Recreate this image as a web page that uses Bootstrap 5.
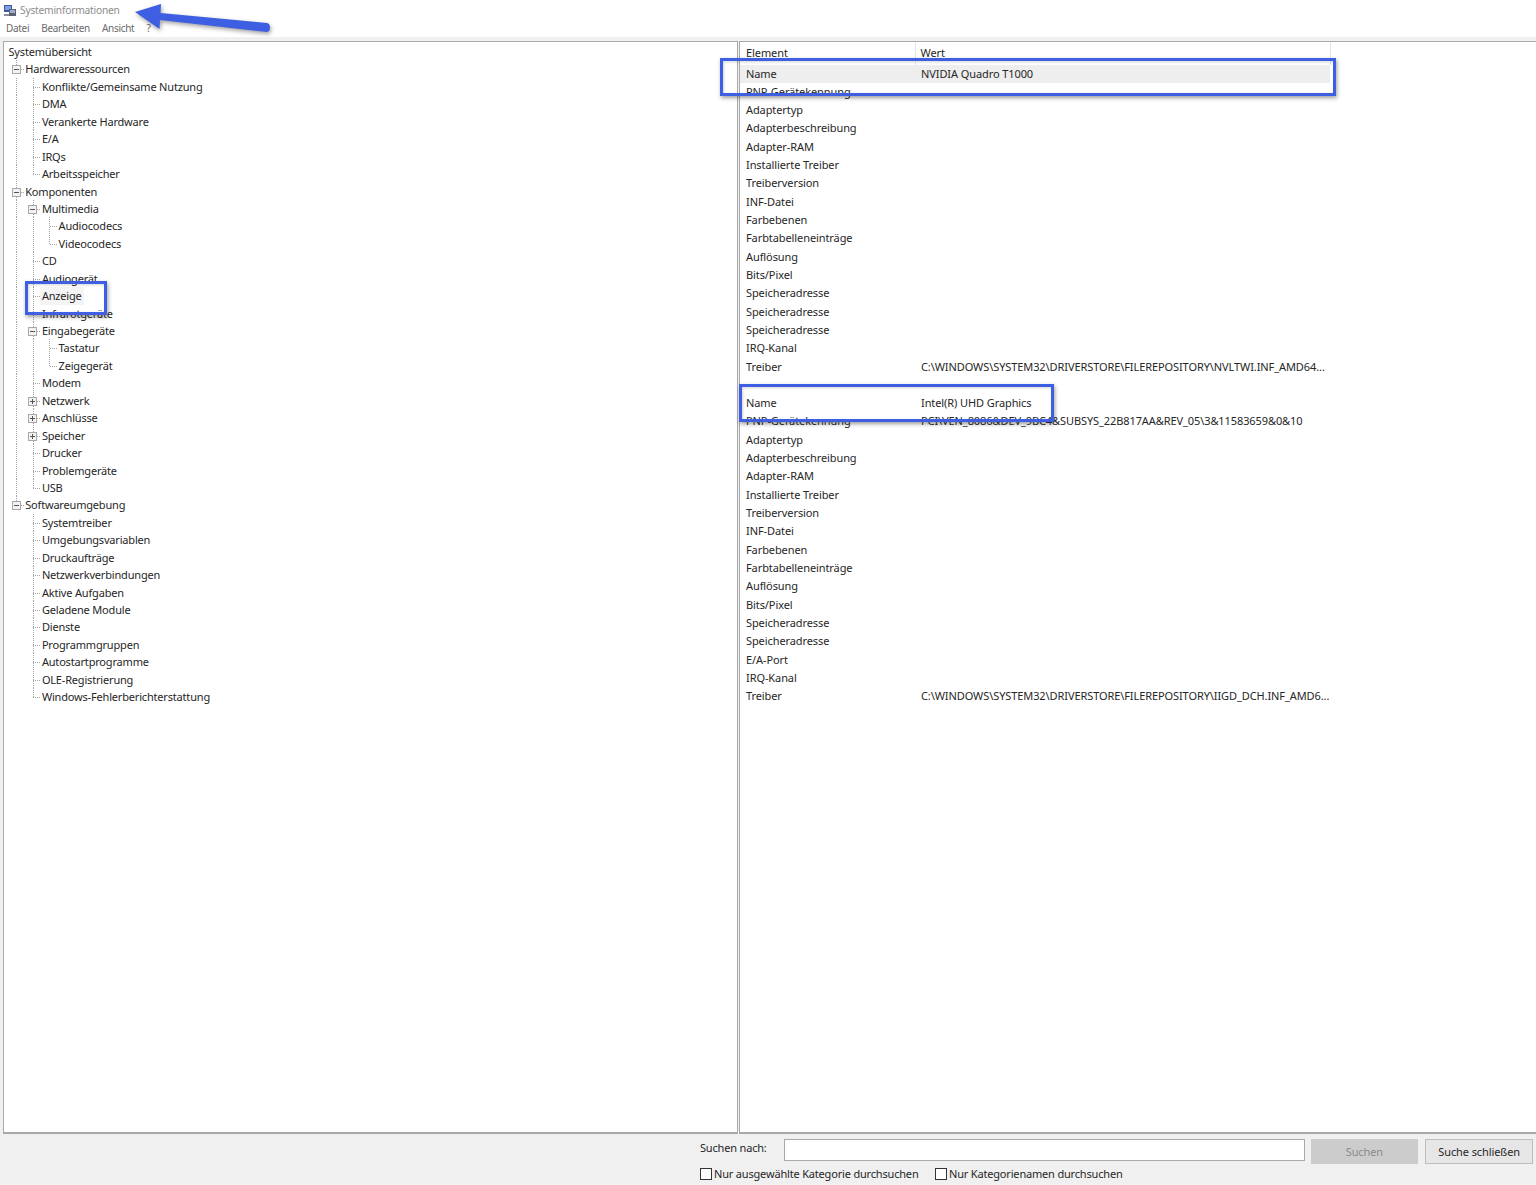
<!doctype html>
<html lang="de"><head><meta charset="utf-8"><title>Systeminformationen</title>
<link href="https://cdn.jsdelivr.net/npm/bootstrap@5.3.0/dist/css/bootstrap.min.css" rel="stylesheet">
<style>
html,body{height:1185px;overflow:hidden}
body{font-family:"Noto Sans","Liberation Sans",sans-serif;font-size:11px;letter-spacing:-.18px;color:#262626;background:#f0f0f0;position:relative}
.topbar{height:37px;background:#fff}
.ttl{height:20px;padding:1px 0 0 3px;color:#8c8c8c;gap:3px;font-size:10.2px;letter-spacing:-.2px}
.mnu{height:17px;padding-left:6px;gap:12px;color:#6a6a6a;font-size:10px;letter-spacing:-.3px}
.panes{height:1097px;padding:4px 0 0 3px;gap:1px}
.pane{background:#fff;border:1.5px solid #a9a9a9;border-bottom-width:2px}
.pl{width:735px;padding:1px 0 0 4.5px}
.pr{flex:1;border-right:0}
.trw{height:17.45px;line-height:17.45px;white-space:nowrap}
.tc{flex:0 0 16.7px;height:100%;position:relative}
.tv,.tt{background:repeating-linear-gradient(to bottom,#a4a4a4 0 1px,transparent 1px 2px) 7.500px 0/1px 100% no-repeat}
.tt::after,.tl::after,.tx::after{content:"";position:absolute;left:8px;top:9px;width:8px;height:1px;background:repeating-linear-gradient(to right,#a4a4a4 0 1px,transparent 1px 2px)}
.tl::before{content:"";position:absolute;left:7.500px;top:0;width:1px;height:9px;background:repeating-linear-gradient(to bottom,#a4a4a4 0 1px,transparent 1px 2px)}
.tx svg{position:absolute;left:3px;top:5px;z-index:1}
.te{background:repeating-linear-gradient(to bottom,#a4a4a4 0 1px,transparent 1px 2px) 7.500px 0/1px 9px no-repeat}
.c1{width:175px}
.c2{width:415px}
.tbl{table-layout:fixed;width:100%;margin:0;--bs-table-bg:transparent;--bs-table-color:#262626;font-size:11px;letter-spacing:-.09px}
.tbl th,.tbl td{padding:0 0 0 6px;height:18.32px;line-height:18.32px;font-weight:400;border:0;white-space:nowrap;overflow:hidden}
.tbl th{height:20.5px;line-height:22.5px;box-shadow:none}
.tbl th+th{border-left:1px solid #e5e5e5}
.tbl th:nth-child(2){padding-left:5px}
.hl td{background:#eeeeee}
.hl td:last-child{background:transparent}
.ftr{padding:5px 3px 0 700px;height:51px}
.lb{width:84px;height:22px;line-height:18px}
.srch{width:522px;height:22px;border:1px solid #a9a9a9;border-radius:0;padding:0 4px;background:#fff}
.bx{height:25px;width:108px;padding:0;border-radius:0;font-size:11px;letter-spacing:-.1px;line-height:21px;--bs-btn-color:#262626;--bs-btn-bg:#e6e6e6;--bs-btn-border-color:#bdbdbd}
.b1{margin-left:6px;--bs-btn-disabled-bg:#cccccc;--bs-btn-disabled-border-color:#cccccc;--bs-btn-disabled-color:#8a8a8a;--bs-btn-disabled-opacity:1}
.b2{margin-left:7px}
.ck{margin-top:2px;line-height:16px}
.ck input.form-check-input{width:12px;height:12px;margin:0 2px 0 0;border:1px solid #333;border-radius:0;flex:none}
.ck1{width:235px}
.mk{position:absolute;border:3px solid #3f5fe3;box-shadow:1px 2px 4px rgba(40,40,40,.45),inset 1px 1px 3px rgba(40,40,40,.2);pointer-events:none}
.m1{left:720px;top:58px;width:616px;height:38px}
.m2{left:739px;top:384px;width:315px;height:38px}
.m3{left:25px;top:281px;width:82px;height:34px}
.arw{position:absolute;left:130px;top:0;filter:drop-shadow(1px 2px 2px rgba(40,40,40,.45))}
.mrk{background:#f4f4f4;padding:0 2px;margin:0 -2px}
</style></head>
<body>
<div class="topbar">
<div class="ttl d-flex align-items-center"><svg width="14" height="14" viewBox="0 0 14 14"><rect x="1" y="1" width="8" height="7" fill="#3a58a8"/><rect x="2" y="2" width="6" height="4" fill="#7fa0dd"/><rect x="6" y="5" width="7" height="7" fill="#5c6270"/><rect x="7" y="6" width="5" height="3" fill="#9fb0cc"/><rect x="1" y="10" width="5" height="2" fill="#8a8f99"/></svg><span>Systeminformationen</span></div>
<div class="mnu d-flex align-items-center"><span>Datei</span><span>Bearbeiten</span><span>Ansicht</span><span>?</span></div>
</div>
<div class="panes d-flex">
<div class="pane pl">
<div class="trw">Systemübersicht</div>
<div class="trw d-flex"><span class="tc tx te"><svg width="9" height="9"><rect x=".5" y=".5" width="8" height="8" fill="#f2f2f2" stroke="#a8a8a8"/><path d="M2 4.500h5" stroke="#555"/></svg></span><span>Hardwareressourcen</span></div>
<div class="trw d-flex"><span class="tc tv"></span><span class="tc tt"></span><span>Konflikte/Gemeinsame Nutzung</span></div>
<div class="trw d-flex"><span class="tc tv"></span><span class="tc tt"></span><span>DMA</span></div>
<div class="trw d-flex"><span class="tc tv"></span><span class="tc tt"></span><span>Verankerte Hardware</span></div>
<div class="trw d-flex"><span class="tc tv"></span><span class="tc tt"></span><span>E/A</span></div>
<div class="trw d-flex"><span class="tc tv"></span><span class="tc tt"></span><span>IRQs</span></div>
<div class="trw d-flex"><span class="tc tv"></span><span class="tc tl"></span><span>Arbeitsspeicher</span></div>
<div class="trw d-flex"><span class="tc tx tv"><svg width="9" height="9"><rect x=".5" y=".5" width="8" height="8" fill="#f2f2f2" stroke="#a8a8a8"/><path d="M2 4.500h5" stroke="#555"/></svg></span><span>Komponenten</span></div>
<div class="trw d-flex"><span class="tc tv"></span><span class="tc tx tv"><svg width="9" height="9"><rect x=".5" y=".5" width="8" height="8" fill="#f2f2f2" stroke="#a8a8a8"/><path d="M2 4.500h5" stroke="#555"/></svg></span><span>Multimedia</span></div>
<div class="trw d-flex"><span class="tc tv"></span><span class="tc tv"></span><span class="tc tt"></span><span>Audiocodecs</span></div>
<div class="trw d-flex"><span class="tc tv"></span><span class="tc tv"></span><span class="tc tl"></span><span>Videocodecs</span></div>
<div class="trw d-flex"><span class="tc tv"></span><span class="tc tt"></span><span>CD</span></div>
<div class="trw d-flex"><span class="tc tv"></span><span class="tc tt"></span><span>Audiogerät</span></div>
<div class="trw d-flex"><span class="tc tv"></span><span class="tc tt"></span><span class="mrk">Anzeige</span></div>
<div class="trw d-flex"><span class="tc tv"></span><span class="tc tt"></span><span>Infrarotgeräte</span></div>
<div class="trw d-flex"><span class="tc tv"></span><span class="tc tx tv"><svg width="9" height="9"><rect x=".5" y=".5" width="8" height="8" fill="#f2f2f2" stroke="#a8a8a8"/><path d="M2 4.500h5" stroke="#555"/></svg></span><span>Eingabegeräte</span></div>
<div class="trw d-flex"><span class="tc tv"></span><span class="tc tv"></span><span class="tc tt"></span><span>Tastatur</span></div>
<div class="trw d-flex"><span class="tc tv"></span><span class="tc tv"></span><span class="tc tl"></span><span>Zeigegerät</span></div>
<div class="trw d-flex"><span class="tc tv"></span><span class="tc tt"></span><span>Modem</span></div>
<div class="trw d-flex"><span class="tc tv"></span><span class="tc tx tv"><svg width="9" height="9"><rect x=".5" y=".5" width="8" height="8" fill="#f2f2f2" stroke="#a8a8a8"/><path d="M2 4.500h5M4.500 2v5" stroke="#555"/></svg></span><span>Netzwerk</span></div>
<div class="trw d-flex"><span class="tc tv"></span><span class="tc tx tv"><svg width="9" height="9"><rect x=".5" y=".5" width="8" height="8" fill="#f2f2f2" stroke="#a8a8a8"/><path d="M2 4.500h5M4.500 2v5" stroke="#555"/></svg></span><span>Anschlüsse</span></div>
<div class="trw d-flex"><span class="tc tv"></span><span class="tc tx tv"><svg width="9" height="9"><rect x=".5" y=".5" width="8" height="8" fill="#f2f2f2" stroke="#a8a8a8"/><path d="M2 4.500h5M4.500 2v5" stroke="#555"/></svg></span><span>Speicher</span></div>
<div class="trw d-flex"><span class="tc tv"></span><span class="tc tt"></span><span>Drucker</span></div>
<div class="trw d-flex"><span class="tc tv"></span><span class="tc tt"></span><span>Problemgeräte</span></div>
<div class="trw d-flex"><span class="tc tv"></span><span class="tc tl"></span><span>USB</span></div>
<div class="trw d-flex"><span class="tc tx te"><svg width="9" height="9"><rect x=".5" y=".5" width="8" height="8" fill="#f2f2f2" stroke="#a8a8a8"/><path d="M2 4.500h5" stroke="#555"/></svg></span><span>Softwareumgebung</span></div>
<div class="trw d-flex"><span class="tc"></span><span class="tc tt"></span><span>Systemtreiber</span></div>
<div class="trw d-flex"><span class="tc"></span><span class="tc tt"></span><span>Umgebungsvariablen</span></div>
<div class="trw d-flex"><span class="tc"></span><span class="tc tt"></span><span>Druckaufträge</span></div>
<div class="trw d-flex"><span class="tc"></span><span class="tc tt"></span><span>Netzwerkverbindungen</span></div>
<div class="trw d-flex"><span class="tc"></span><span class="tc tt"></span><span>Aktive Aufgaben</span></div>
<div class="trw d-flex"><span class="tc"></span><span class="tc tt"></span><span>Geladene Module</span></div>
<div class="trw d-flex"><span class="tc"></span><span class="tc tt"></span><span>Dienste</span></div>
<div class="trw d-flex"><span class="tc"></span><span class="tc tt"></span><span>Programmgruppen</span></div>
<div class="trw d-flex"><span class="tc"></span><span class="tc tt"></span><span>Autostartprogramme</span></div>
<div class="trw d-flex"><span class="tc"></span><span class="tc tt"></span><span>OLE-Registrierung</span></div>
<div class="trw d-flex"><span class="tc"></span><span class="tc tl"></span><span>Windows-Fehlerberichterstattung</span></div>
</div>
<div class="pane pr">
<table class="table tbl">
<colgroup><col class="c1"><col class="c2"><col></colgroup>
<thead><tr><th>Element</th><th>Wert</th><th></th></tr></thead>
<tbody>
<tr class="hl"><td>Name</td><td>NVIDIA Quadro T1000</td><td></td></tr>
<tr><td>PNP-Gerätekennung</td><td></td><td></td></tr>
<tr><td>Adaptertyp</td><td></td><td></td></tr>
<tr><td>Adapterbeschreibung</td><td></td><td></td></tr>
<tr><td>Adapter-RAM</td><td></td><td></td></tr>
<tr><td>Installierte Treiber</td><td></td><td></td></tr>
<tr><td>Treiberversion</td><td></td><td></td></tr>
<tr><td>INF-Datei</td><td></td><td></td></tr>
<tr><td>Farbebenen</td><td></td><td></td></tr>
<tr><td>Farbtabelleneinträge</td><td></td><td></td></tr>
<tr><td>Auflösung</td><td></td><td></td></tr>
<tr><td>Bits/Pixel</td><td></td><td></td></tr>
<tr><td>Speicheradresse</td><td></td><td></td></tr>
<tr><td>Speicheradresse</td><td></td><td></td></tr>
<tr><td>Speicheradresse</td><td></td><td></td></tr>
<tr><td>IRQ-Kanal</td><td></td><td></td></tr>
<tr><td>Treiber</td><td>C:\WINDOWS\SYSTEM32\DRIVERSTORE\FILEREPOSITORY\NVLTWI.INF_AMD64...</td><td></td></tr>
<tr><td></td><td></td><td></td></tr>
<tr><td>Name</td><td>Intel(R) UHD Graphics</td><td></td></tr>
<tr><td>PNP-Gerätekennung</td><td>PCI\VEN_8086&amp;DEV_9BC4&amp;SUBSYS_22B817AA&amp;REV_05\3&amp;11583659&amp;0&amp;10</td><td></td></tr>
<tr><td>Adaptertyp</td><td></td><td></td></tr>
<tr><td>Adapterbeschreibung</td><td></td><td></td></tr>
<tr><td>Adapter-RAM</td><td></td><td></td></tr>
<tr><td>Installierte Treiber</td><td></td><td></td></tr>
<tr><td>Treiberversion</td><td></td><td></td></tr>
<tr><td>INF-Datei</td><td></td><td></td></tr>
<tr><td>Farbebenen</td><td></td><td></td></tr>
<tr><td>Farbtabelleneinträge</td><td></td><td></td></tr>
<tr><td>Auflösung</td><td></td><td></td></tr>
<tr><td>Bits/Pixel</td><td></td><td></td></tr>
<tr><td>Speicheradresse</td><td></td><td></td></tr>
<tr><td>Speicheradresse</td><td></td><td></td></tr>
<tr><td>E/A-Port</td><td></td><td></td></tr>
<tr><td>IRQ-Kanal</td><td></td><td></td></tr>
<tr><td>Treiber</td><td>C:\WINDOWS\SYSTEM32\DRIVERSTORE\FILEREPOSITORY\IIGD_DCH.INF_AMD6...</td><td></td></tr>
</tbody></table>
</div>
</div>
<div class="ftr">
<div class="d-flex">
<label class="lb" for="q">Suchen nach:</label>
<input id="q" class="srch" type="text">
<button class="btn bx b1" disabled>Suchen</button>
<button class="btn bx b2">Suche schließen</button>
</div>
<div class="d-flex ck">
<label class="d-flex align-items-center ck1"><input type="checkbox" class="form-check-input">Nur ausgewählte Kategorie durchsuchen</label>
<label class="d-flex align-items-center"><input type="checkbox" class="form-check-input">Nur Kategorienamen durchsuchen</label>
</div>
</div>
<div class="mk m1"></div>
<div class="mk m2"></div>
<div class="mk m3"></div>
<svg class="arw" width="150" height="40" viewBox="130 0 150 40"><path d="M135 12 161 4 160.500 13 267 23q3 .5 3 4.500t-3 4.500L160 20 159.500 29Z" fill="#3f5fe3"/></svg>
</body></html>
